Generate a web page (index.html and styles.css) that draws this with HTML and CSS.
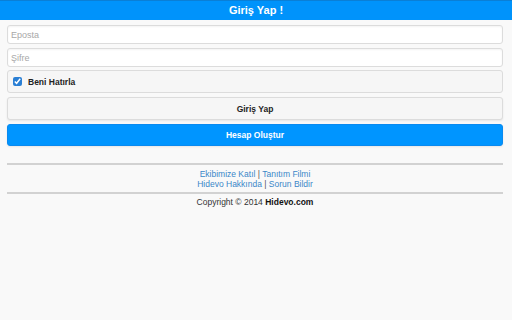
FILE: index.html
```html
<!DOCTYPE html>
<html lang="tr">
<head>
  <meta charset="UTF-8">
  <title>Giriş Yap - Hidevo</title>
  <link rel="stylesheet" href="styles.css">
</head>
<body>

  <div class="header">
    <h1>Giriş Yap !</h1>
  </div>

  <div class="content">
    <form class="login-form">
      <input type="text" class="field" placeholder="Eposta">
      <input type="password" class="field" placeholder="Şifre">

      <label class="remember">
        <input type="checkbox" checked>
        <span>Beni Hatırla</span>
      </label>

      <button type="button" class="btn">Giriş Yap</button>
      <button type="button" class="btn btn-primary">Hesap Oluştur</button>
    </form>

    <div class="footer">
      <div class="footer-links">
        <a href="#">Ekibimize Katıl</a> | <a href="#">Tanıtım Filmi</a><br>
        <a href="#">Hidevo Hakkında</a> | <a href="#">Sorun Bildir</a>
      </div>
      <div class="copyright">Copyright © 2014 <b>Hidevo.com</b></div>
    </div>
  </div>

</body>
</html>
```

FILE: styles.css
```css
body {
  font-family: "Liberation Sans", Arial, Helvetica, sans-serif;
  background-color: #f9f9f9;
  margin: 0;
  padding: 0;
  color: #333;
}

.header {
  background-color: #0093fb;
  border-top: 1px solid #0a7fd6;
  height: 19px;
  text-align: center;
}

.header h1 {
  margin: 0;
  font-size: 11px;
  line-height: 19px;
  color: #fff;
  font-weight: bold;
}

.content {
  padding: 5px 9px 0 7px;
}

.login-form {
  display: flex;
  flex-direction: column;
  gap: 4px;
}

.field {
  box-sizing: border-box;
  height: 19px;
  margin: 0;
  padding: 0 3px;
  border: 1px solid #dcdcdc;
  border-radius: 3px;
  background: #fff;
  font-family: inherit;
  font-size: 9px;
  box-shadow: inset 0 1px 2px rgba(0,0,0,0.05);
}

.field::placeholder {
  color: #a8a8a8;
}

.remember {
  box-sizing: border-box;
  height: 23px;
  display: flex;
  align-items: center;
  gap: 6px;
  padding: 0 5px;
  margin-top: -1px;
  background: #f6f6f6;
  border: 1px solid #dcdcdc;
  border-radius: 3px;
  font-size: 8.5px;
  font-weight: bold;
  color: #222;
}

.remember input {
  width: 9px;
  height: 9px;
  margin: 0;
  accent-color: #2a7fd4;
}

.btn {
  box-sizing: border-box;
  height: 23px;
  margin: 0;
  border: 1px solid #dcdcdc;
  border-radius: 3px;
  background: #f6f6f6;
  font-family: inherit;
  font-size: 8.5px;
  font-weight: bold;
  color: #222;
  box-shadow: 0 1px 2px rgba(0,0,0,0.08);
}

.btn-primary {
  height: 22px;
  background: #0095ff;
  border-color: #0a8af0;
  color: #fff;
}

.footer {
  margin-top: 17px;
  text-align: center;
  font-size: 8.5px;
}

.footer-links {
  border-top: 2px solid #d2d2d2;
  border-bottom: 2px solid #d2d2d2;
  padding: 4px 0 3px;
  line-height: 10px;
  color: #555;
}

.footer-links a {
  color: #3a87c8;
  text-decoration: none;
}

.copyright {
  padding-top: 3px;
  color: #333;
}

.copyright b {
  color: #111;
}
```
